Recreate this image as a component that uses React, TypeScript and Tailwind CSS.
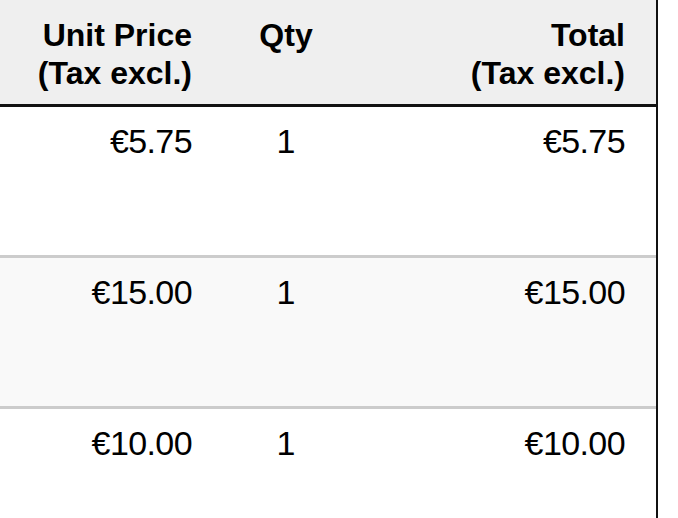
const rows = [
  { unit: "€5.75", qty: 1, total: "€5.75" },
  { unit: "€15.00", qty: 1, total: "€15.00" },
  { unit: "€10.00", qty: 1, total: "€10.00" },
];

export default function App() {
  return (
    <div className="min-h-screen bg-white font-['Liberation_Sans',Arial,sans-serif] text-black">
      <div className="w-[658px] border-r-2 border-[#111] overflow-hidden h-[518px]">
        {/* Header */}
        <div className="grid grid-cols-[210px_152px_294px] bg-[#efefef] border-b-[3px] border-[#111] h-[107px] text-[32px] leading-[38px] font-bold">
          <div className="pt-[16px] pr-[18px] text-right">
            Unit Price
            <br />
            (Tax excl.)
          </div>
          <div className="pt-[16px] text-center">Qty</div>
          <div className="pt-[16px] pr-[31px] text-right">
            Total
            <br />
            (Tax excl.)
          </div>
        </div>

        {/* Rows */}
        {rows.map((r, i) => (
          <div
            key={i}
            className={`grid grid-cols-[210px_152px_294px] h-[151px] border-b-[3px] border-[#cccccc] text-[34px] leading-[36px] ${
              i % 2 === 1 ? "bg-[#f9f9f9]" : "bg-white"
            }`}
          >
            <div className="pt-[16px] pr-[18px] text-right tracking-[-0.6px]">{r.unit}</div>
            <div className="pt-[16px] text-center">{r.qty}</div>
            <div className="pt-[16px] pr-[31px] text-right tracking-[-0.6px]">{r.total}</div>
          </div>
        ))}
      </div>
    </div>
  );
}
